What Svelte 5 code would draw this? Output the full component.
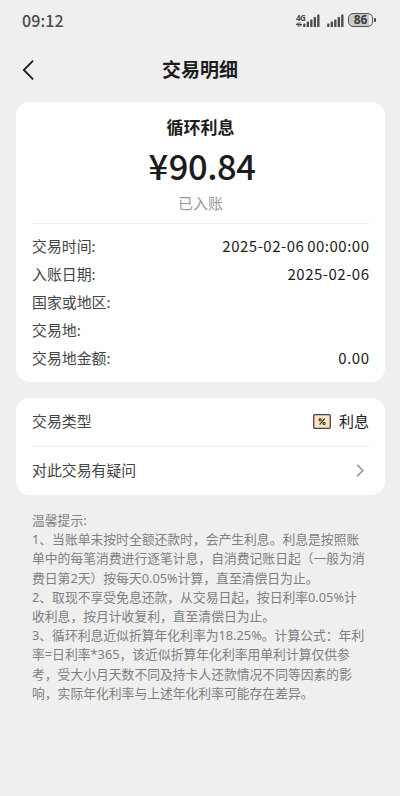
<script>
  const details = [
    { label: '交易时间:', value: '2025-02-06 00:00:00' },
    { label: '入账日期:', value: '2025-02-06' },
    { label: '国家或地区:', value: '' },
    { label: '交易地:', value: '' },
    { label: '交易地金额:', value: '0.00' }
  ];

  const tips = [
    '温馨提示:',
    '1、当账单未按时全额还款时，会产生利息。利息是按照账',
    '单中的每笔消费进行逐笔计息，自消费记账日起（一般为消',
    '费日第2天）按每天0.05%计算，直至清偿日为止。',
    '2、取现不享受免息还款，从交易日起，按日利率0.05%计',
    '收利息，按月计收复利，直至清偿日为止。',
    '3、循环利息近似折算年化利率为18.25%。计算公式：年利',
    '率=日利率*365，该近似折算年化利率用单利计算仅供参',
    '考，受大小月天数不同及持卡人还款情况不同等因素的影',
    '响，实际年化利率与上述年化利率可能存在差异。'
  ];

  const bars = [3.5, 5.5, 7.5, 10, 12.5];
</script>

<div class="page" lang="zh-CN">
  <div class="status">
    <span class="time">09:12</span>
    <div class="status-icons">
      <div class="network">
        <span class="net-label">4G</span>
        <svg width="6" height="5" viewBox="0 0 6 5" fill="none" stroke="#4a4a4a" stroke-width="1">
          <path d="M2 4.8V.7L.4 2.5M4 .2v4.1l1.6-1.8M0 2.5h6" />
        </svg>
      </div>
      <svg class="signal" width="17" height="13" viewBox="0 0 17 13" fill="#4a4a4a">
        {#each bars as h, i}
          <rect x={i * 3.5 + 0.2} y={13 - h} width="2.3" height={h} rx=".6" />
        {/each}
      </svg>
      <svg class="signal second" width="17" height="13" viewBox="0 0 17 13" fill="#4a4a4a">
        {#each bars as h, i}
          <rect x={i * 3.5 + 0.2} y={13 - h} width="2.3" height={h} rx=".6" />
        {/each}
      </svg>
      <div class="battery"><span>86</span></div>
      <i class="cap"></i>
    </div>
  </div>

  <header class="nav">
    <button class="back" aria-label="返回">
      <svg width="12" height="20" viewBox="0 0 12 20" fill="none" stroke="#1c1c1c" stroke-width="1.8" stroke-linecap="round">
        <path d="M10.6 1.2 1.8 10l8.8 8.8" />
      </svg>
    </button>
    <h1>交易明细</h1>
  </header>

  <section class="card summary">
    <h2>循环利息</h2>
    <div class="amount"><span class="yen">¥</span>90.84</div>
    <div class="state">已入账</div>
    <div class="details">
      {#each details as item}
        <div class="row">
          <span class="label">{item.label}</span>
          <span class="value">{item.value}</span>
        </div>
      {/each}
    </div>
  </section>

  <section class="card options">
    <div class="option">
      <span class="label">交易类型</span>
      <span class="type">
        <svg width="18" height="15" viewBox="0 0 18 15" fill="none" stroke="#49443e">
          <rect x=".7" y=".7" width="16.6" height="13.6" rx="1.2" fill="#fbe3c3" stroke-width="1.3" />
          <path d="M11.7 4.6 6.6 10.6" stroke-width="1.4" />
          <circle cx="7.1" cy="5.8" r="1.1" stroke-width="1.2" />
          <circle cx="11.1" cy="9.5" r="1.1" stroke-width="1.2" />
        </svg>
        利息
      </span>
    </div>
    <div class="option">
      <span class="label">对此交易有疑问</span>
      <svg class="arrow" width="8" height="13" viewBox="0 0 8 13" fill="none" stroke="#999" stroke-width="1.7">
        <path d="m1.2.8 5.6 5.7-5.6 5.7" />
      </svg>
    </div>
  </section>

  <div class="tips">
    {#each tips as line}
      <p>{line}</p>
    {/each}
  </div>
</div>

<style>
  :global(body) {
    background: #efefef;
  }

  .page {
    box-sizing: border-box;
    width: 400px;
    height: 796px;
    overflow: hidden;
    background: #efefef;
    color: #1c1c1c;
    font-family: "Noto Sans", "Noto Sans CJK SC", sans-serif;
  }

  .status {
    display: flex;
    justify-content: space-between;
    align-items: center;
    height: 40px;
    padding: 0 24px 0 22px;
  }

  .time,
  .amount,
  .value {
    font-family: "Noto Sans CJK SC", sans-serif;
  }

  .time {
    margin-top: -1px;
    color: #4a4a4a;
    font-size: 16px;
    font-weight: 500;
    line-height: 24px;
    letter-spacing: 0.1px;
  }

  .status-icons {
    display: flex;
    align-items: center;
  }

  .network {
    display: flex;
    flex-direction: column;
    width: 7px;
    height: 13px;
  }

  .net-label {
    color: #4a4a4a;
    font-size: 8px;
    font-weight: 700;
    line-height: 7px;
    letter-spacing: -0.6px;
    margin-bottom: 1px;
  }

  .second {
    margin: 0 4px 0 7px;
  }

  .battery {
    display: flex;
    align-items: center;
    justify-content: center;
    box-sizing: border-box;
    width: 25px;
    height: 14px;
    border: 1.5px solid #555;
    border-radius: 5px;
    background: linear-gradient(90deg, #cacaca 86%, #efefef 86%);
    color: #3c3c3c;
    font-size: 12px;
    font-weight: 700;
    line-height: 12px;
  }

  .cap {
    width: 2px;
    height: 4px;
    margin-left: 1px;
    border-radius: 0 1px 1px 0;
    background: #4a4a4a;
  }

  .nav {
    display: grid;
    grid-template-columns: 60px 1fr 60px;
    align-items: center;
    height: 60px;
  }

  .back {
    display: flex;
    padding: 0 0 0 22px;
    border: 0;
    background: none;
  }

  h1,
  h2,
  p {
    margin: 0;
  }

  h1 {
    font-size: 19px;
    font-weight: 700;
    line-height: 28px;
    text-align: center;
  }

  .card {
    box-sizing: border-box;
    width: 369px;
    margin-left: 16px;
    padding: 0 16px;
    border-radius: 14px;
    background: #fff;
  }

  .summary {
    height: 280px;
    margin-top: 2px;
    padding-top: 14px;
  }

  h2 {
    font-size: 17px;
    font-weight: 700;
    line-height: 24px;
    text-align: center;
  }

  .amount {
    height: 46px;
    margin-top: 2px;
    padding-left: 3px;
    font-size: 34.5px;
    font-weight: 500;
    line-height: 46px;
    letter-spacing: -0.4px;
    text-align: center;
  }

  .yen {
    margin-right: 1px;
  }

  .state {
    height: 22px;
    margin-top: 4px;
    color: #999;
    font-size: 15px;
    line-height: 22px;
    text-align: center;
  }

  .details {
    margin-top: 9px;
    padding-top: 8px;
    border-top: 1px solid #eee;
  }

  .row {
    display: flex;
    justify-content: space-between;
    height: 27.9px;
    font-size: 15px;
    line-height: 28px;
  }

  .label {
    color: #444;
    font-size: 14.9px;
  }

  .value {
    margin-right: -0.5px;
    letter-spacing: 0.5px;
    word-spacing: -1px;
  }

  .options {
    height: 97px;
    margin-top: 16px;
  }

  .option {
    display: flex;
    align-items: center;
    justify-content: space-between;
    height: 48px;
    font-size: 15px;
  }

  .option .label,
  .type {
    margin-top: -3px;
  }

  .option + .option {
    border-top: 1px solid #eee;
  }

  .type {
    display: flex;
    align-items: center;
    gap: 8px;
  }

  .type svg {
    margin-top: 2px;
  }

  .arrow {
    margin: -2px 5px 0 0;
  }

  .tips {
    margin: 16px 0 0 32px;
    color: #808080;
    font-size: 12.8px;
    line-height: 19.2px;
    white-space: nowrap;
  }

  .tips p {
    height: 19.2px;
  }
</style>
